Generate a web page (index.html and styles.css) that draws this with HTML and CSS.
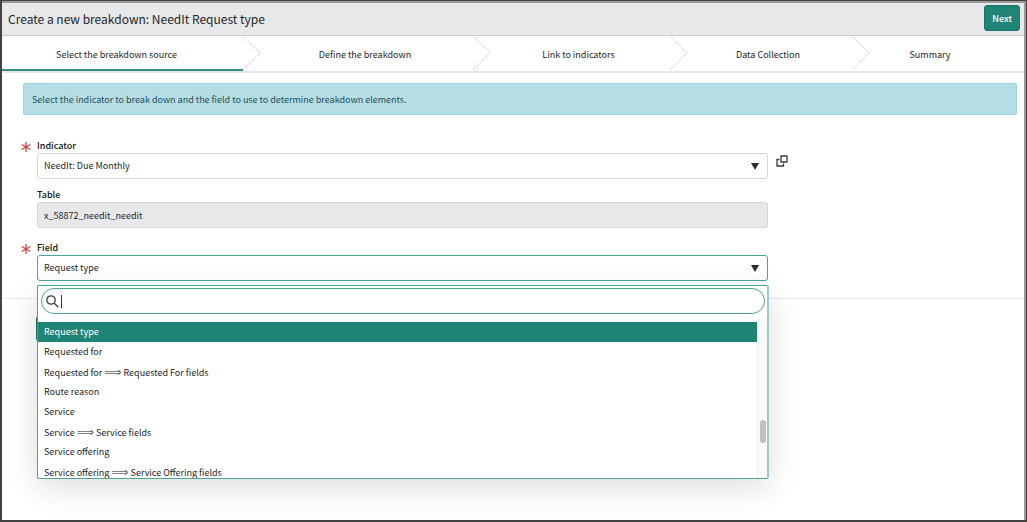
FILE: index.html
```html
<!DOCTYPE html>
<html lang="en">
<head>
  <meta charset="UTF-8">
  <meta name="viewport" content="width=device-width, initial-scale=1.0">
  <title>Create a new breakdown</title>
  <link rel="stylesheet" href="styles.css">
</head>
<body>
  <div class="page">
    <header class="header">
      <h1 class="title">Create a new breakdown: NeedIt Request type</h1>
      <button type="button" class="btn-next">Next</button>
    </header>

    <ol class="steps">
      <li class="step active">Select the breakdown source
        <svg class="chevron" viewBox="0 0 18 34"><path d="M0 0 17 17 0 34"/></svg>
      </li>
      <li class="step">Define the breakdown
        <svg class="chevron" viewBox="0 0 18 34"><path d="M0 0 17 17 0 34"/></svg>
      </li>
      <li class="step">Link to indicators
        <svg class="chevron" viewBox="0 0 18 34"><path d="M0 0 17 17 0 34"/></svg>
      </li>
      <li class="step">Data Collection
        <svg class="chevron" viewBox="0 0 18 34"><path d="M0 0 17 17 0 34"/></svg>
      </li>
      <li class="step">Summary</li>
    </ol>

    <div class="message">Select the indicator to break down and the field to use to determine breakdown elements.</div>

    <form class="form">
      <div class="row">
        <svg class="required" viewBox="0 0 10 10"><path d="M5 0V10M.6 2.5 9.4 7.5M9.4 2.5.6 7.5"/></svg>
        <div class="field">
          <label for="indicator">Indicator</label>
          <div class="select-wrap">
            <select id="indicator" class="control">
              <option>NeedIt: Due Monthly</option>
            </select>
            <svg class="caret" viewBox="0 0 8 7"><path d="M0 0H8L4 7Z"/></svg>
          </div>
        </div>
        <button type="button" class="btn-popup" aria-label="Open record">
          <svg viewBox="0 0 12 12"><path d="M5 1H11V7H5ZM3.5 4.5H1V11H7.5V8.5"/></svg>
        </button>
      </div>

      <div class="row">
        <div class="field no-mark">
          <label for="table">Table</label>
          <input type="text" id="table" class="control" value="x_58872_needit_needit" readonly>
        </div>
      </div>

      <div class="row">
        <svg class="required" viewBox="0 0 10 10"><path d="M5 0V10M.6 2.5 9.4 7.5M9.4 2.5.6 7.5"/></svg>
        <div class="field">
          <label for="field">Field</label>
          <div class="select-wrap">
            <select id="field" class="control open">
              <option>Request type</option>
            </select>
            <svg class="caret" viewBox="0 0 8 7"><path d="M0 0H8L4 7Z"/></svg>

            <div class="dropdown">
              <div class="search">
                <svg class="search-icon" viewBox="0 0 13 13"><circle cx="5" cy="5" r="4.2"/><path d="M8 8 12.3 12.3"/></svg>
                <span class="cursor"></span>
                <input type="text" class="search-input" aria-label="Search fields">
              </div>
              <div class="results">
                <ul class="options">
                  <li class="option selected">Request type</li>
                  <li class="option">Requested for</li>
                  <li class="option">Requested for <span class="arrow">⟹</span> Requested For fields</li>
                  <li class="option">Route reason</li>
                  <li class="option">Service</li>
                  <li class="option">Service <span class="arrow">⟹</span> Service fields</li>
                  <li class="option">Service offering</li>
                  <li class="option">Service offering <span class="arrow">⟹</span> Service Offering fields</li>
                </ul>
                <div class="scrollbar"><div class="thumb"></div></div>
              </div>
            </div>
          </div>
        </div>
      </div>
    </form>

    <div class="actions">
      <div class="action-bar"></div>
    </div>
  </div>
</body>
</html>
```
FILE: styles.css
```css
* {
  box-sizing: border-box;
}
body {
  margin: 0;
  background: #fff;
  color: #262626;
  font-family: 'Noto Sans CJK SC', 'Open Sans', sans-serif;
  font-size: 9px;
  line-height: 16px;
}
.page {
  min-height: 100vh;
  border: 2px solid #424242;
  border-width: 1px 1px 2px 2px;
  box-shadow: inset -2px 0 #999;
  padding-right: 2px;
}

/* header */
.header {
  display: flex;
  align-items: flex-start;
  justify-content: space-between;
  height: 35px;
  padding: 0 4px 0 6px;
  background: #e6e8ea;
  border-top: 2px solid #999;
  border-bottom: 1px solid #cbcdcf;
}
.title {
  margin: 0;
  font-size: 12px;
  font-weight: 400;
  line-height: 32px;
}
.btn-next {
  height: 26px;
  margin-top: 2px;
  padding: 0 7px;
  background: #1f8476;
  color: #fff;
  border: 1px solid #1a7468;
  border-radius: 3px;
  font-family: inherit;
  font-size: 9px;
  font-weight: 500;
}

/* wizard steps */
.steps {
  display: grid;
  grid-template-columns: 241fr 230fr 197fr 182fr 172fr;
  height: 37px;
  margin: 0;
  padding: 0;
  list-style: none;
  border-bottom: 2px solid #e6e6e6;
}
.step {
  position: relative;
  height: 35px;
  padding-left: 14px;
  line-height: 38px;
  text-align: center;
}
.step:first-child {
  padding: 0 12px 0 0;
}
.step:last-child {
  padding: 0 16px 0 0;
}
.step.active {
  border-bottom: 2px solid #35917f;
}
.chevron {
  position: absolute;
  top: 0;
  right: -18px;
  width: 18px;
  height: 34px;
  fill: none;
  stroke: #dedede;
}

.message {
  margin: 10px 7px 0 21px;
  padding: 8px 8px 6px;
  background: #b5dde5;
  border: 1px solid #9bd3de;
  border-radius: 2px;
  color: #1f4e58;
}

/* form */
.form {
  padding: 23px 12px 17px 19px;
  border-bottom: 1px solid #ececec;
}
.row {
  display: grid;
  grid-template-columns: 16px minmax(0, 3fr) minmax(0, 1fr);
}
.row + .row {
  margin-top: 8px;
}
.row:last-child {
  margin-top: 12px;
}
.field {
  display: flex;
  flex-direction: column;
}
.no-mark {
  grid-column: 2;
}
label {
  height: 15px;
  color: #111;
  font-weight: 500;
}
.required {
  width: 10px;
  height: 10px;
  margin-top: 4px;
  stroke: #d9423c;
  stroke-width: 1.3;
}
.select-wrap {
  position: relative;
}
.control {
  display: block;
  width: 100%;
  height: 26px;
  padding: 0 6px;
  appearance: none;
  background: #fff;
  border: 1px solid #d4d6d8;
  border-radius: 3px;
  color: inherit;
  font: inherit;
}
.control[readonly] {
  background: #e6e8ea;
}
.control.open {
  border-color: #4da494;
}
.caret {
  position: absolute;
  top: 10px;
  right: 9px;
  width: 8px;
  height: 7px;
  fill: #2b2b2b;
}
.btn-popup {
  align-self: start;
  width: 12px;
  height: 12px;
  margin: 17px 0 0 8px;
  padding: 0;
  background: none;
  border: 0;
}
.btn-popup svg {
  display: block;
  fill: none;
  stroke: #3c3c3c;
  stroke-width: 1.3;
}

/* open list */
.dropdown {
  position: absolute;
  z-index: 2;
  top: 30px;
  left: 0;
  right: -1px;
  padding-top: 2px;
  background: #fff;
  border: 1px solid #4da494;
  border-right: 2px solid #9ccdc4;
  border-radius: 2px;
  box-shadow: 0 8px 32px rgba(0, 0, 0, 0.14);
}
.search {
  display: flex;
  align-items: center;
  height: 26px;
  margin: 0 2px 0 3px;
  padding: 0 12px 0 4px;
  border: 1px solid #4da494;
  border-radius: 13px;
}
.search-icon {
  width: 13px;
  height: 13px;
  fill: none;
  stroke: #3c3c3c;
  stroke-width: 1.3;
}
.cursor {
  width: 1px;
  height: 13px;
  margin-left: 2px;
  background: #333;
}
.search-input {
  flex: 1;
  min-width: 0;
  padding: 0 2px;
  border: 0;
  outline: 0;
  background: none;
  font: inherit;
}
.results {
  display: flex;
  height: 160px;
  margin-top: 4px;
  overflow: hidden;
}
.options {
  flex: 1;
  margin: 0;
  padding: 4px 0 0;
  list-style: none;
}
.option {
  height: 20px;
  padding-left: 6px;
  line-height: 20px;
}
.option.selected {
  background: #1f8476;
  color: #fff;
}
.arrow {
  color: #666;
  font-family: 'DejaVu Sans', sans-serif;
  font-size: 12px;
}
.scrollbar {
  width: 10px;
  padding: 102px 1px 0 2px;
  background: #fafafa;
  border-left: 1px solid #eee;
}
.thumb {
  width: 6px;
  height: 23px;
  background: #c1c1c1;
  border-radius: 3px;
}

.actions {
  padding: 17px 34px;
}
.action-bar {
  width: 60px;
  height: 25px;
  background: #1f6a5f;
  border-radius: 3px;
}
```
